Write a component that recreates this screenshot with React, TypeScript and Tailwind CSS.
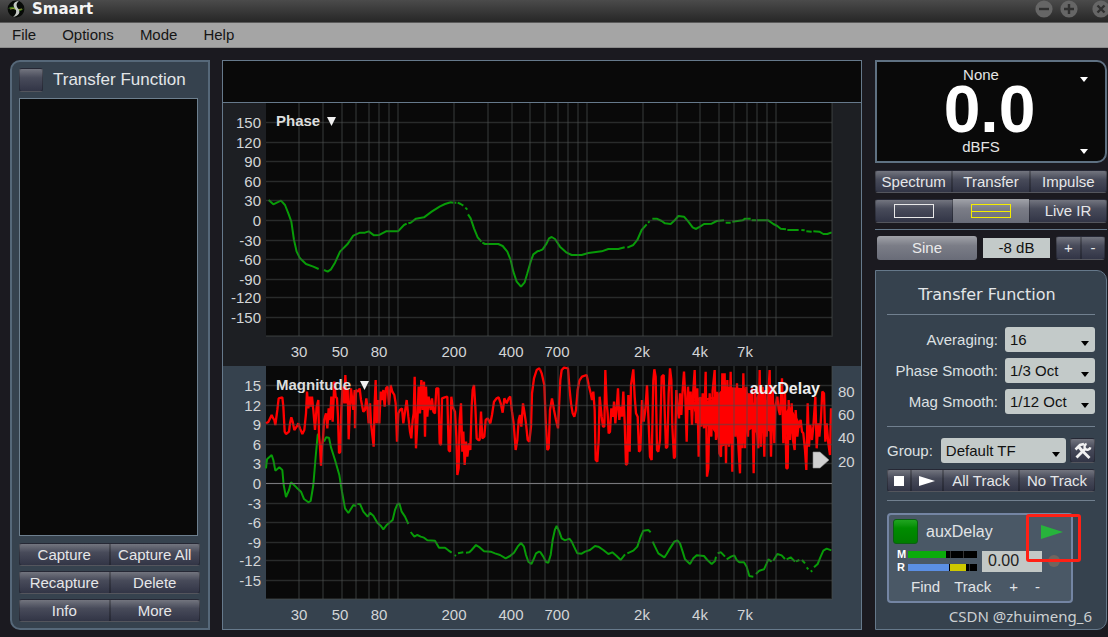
import clsx from 'clsx';
import type { ReactNode } from 'react';

const button =
  'flex items-center justify-center bg-linear-to-b from-[#73757f] via-[#484b5a] via-40% to-[#323546] text-[15px] leading-5 text-[#e6e7e9] border-black/25';

const GRID_X = [
  76, 100, 119, 133, 146, 156, 166, 175, 231, 265, 289, 307, 322, 335, 345, 355, 364, 420, 454, 477, 496, 511, 524,
  534, 544, 553,
];
const GRID_Y = [19, 39, 58, 78, 97, 117, 137, 156, 176, 194, 214];

const FREQS: [number, string][] = [
  [76, '30'],
  [117, '50'],
  [156, '80'],
  [231, '200'],
  [288, '400'],
  [334, '700'],
  [419, '2k'],
  [477, '4k'],
  [522, '7k'],
];

const PHASES = ['150', '120', '90', '60', '30', '0', '-30', '-60', '-90', '-120', '-150'];
const LEVELS = ['15', '12', '9', '6', '3', '0', '-3', '-6', '-9', '-12', '-15'];
const COHERENCE: [number, string][] = [
  [26, '80'],
  [49, '60'],
  [72, '40'],
  [96, '20'],
];

// Traces hold three units per chart unit, split in a low and a high half.
const PHASE_LOW =
  'M146,330 160,343 172,337 183,332 195,345 205,370 214,395 222,450 230,485 240,505 258,522 280,530 296,537 M312,540 323,545 333,538 345,518 360,485 382,463 400,437 420,428 435,428 446,424 462,436 478,435 498,424 534,424 552,405 560,401 M565,400 572,398 575,396 588,386 612,382 635,365 660,349 675,342 692,337 700,338 M704,338 709,338 M713,338 722,342 730,347 M736,353 742,359 M744,373 752,385 762,415 773,442 784,455 M787,458 795,462 835,462 848,468 862,485 872,510 880,545 890,575 903,590 914,577 922,550 932,515 940,493 952,484 960,482';
const PHASE_HIGH =
  'M0,482 8,478 20,460 27,445 35,441 45,447 60,470 80,488 95,495 125,495 145,489 185,484 205,477 235,477 254,472 M262,473 280,465 292,450 305,420 320,403 M324,398 329,394 M337,386 350,386 365,393 375,400 392,402 404,391 415,378 432,380 445,395 458,412 467,417 480,410 492,402 515,401 530,393 552,391 M557,398 572,398 M577,395 608,391 615,386 632,386 M635,391 648,391 M651,391 685,391 700,402 712,408 722,416 738,418 M742,420 776,420 M784,420 794,421 M799,424 815,425 M820,424 838,425 850,432 862,432 875,427';
const MAG_LOW =
  'M138,325 141,298 155,285 160,300 166,332 178,322 187,330 191,375 198,411 207,390 213,367 222,375 230,383 243,395 252,417 265,427 272,423 280,375 287,290 293,225 297,220 M312,245 318,232 327,233 333,262 345,300 358,345 366,395 375,445 385,459 400,435 408,438 M412,432 420,432 430,455 443,470 450,458 460,467 472,488 482,497 490,508 500,495 510,487 518,480 525,450 532,433 538,430 545,455 555,470 565,492 M572,516 583,530 592,525 602,530 612,533 622,541 645,542 657,563 675,563 685,571 695,578 M704,588 708,585 M714,580 730,577 M738,578 748,577 755,570 768,555 780,563 792,574 812,575 825,580 840,585 857,595 870,588 882,578 893,560 903,549 912,560 918,585 925,605 934,612 940,600 948,580 957,575 960,576';
const MAG_HIGH =
  'M0,575 10,590 18,606 25,608 32,585 38,540 45,508 50,498 58,515 65,535 75,541 88,536 95,545 102,560 112,580 125,581 135,575 150,570 165,558 175,560 190,570 205,582 217,577 230,588 242,600 255,583 M262,580 280,572 292,560 302,530 310,512 325,510 332,517 M338,545 345,560 355,580 373,592 380,582 390,565 403,545 412,541 420,550 428,575 435,598 450,612 460,595 470,586 492,588 502,600 515,612 525,603 528,590 M533,580 543,577 555,590 M560,598 573,590 583,586 590,600 598,607 612,607 620,620 628,648 640,650 M648,642 658,632 672,628 680,610 685,598 695,605 M700,602 712,582 725,586 735,597 M740,598 752,592 765,605 M768,604 778,600 M786,600 795,610 M800,622 805,628 M812,635 817,632 M822,622 833,612 842,590 850,572 860,566 874,571';
const COH_LOW =
  'M138,190 145,186 155,165 158,172 163,180 166,195 172,150 176,115 187,112 190,140 194,215 198,222 207,215 210,190 214,172 218,185 223,210 230,200 235,190 240,205 247,222 253,210 258,160 261,95 265,145 269,110 272,140 276,110 280,150 285,210 290,140 295,120 297,225 300,260 303,317 306,260 309,235 312,180 318,160 322,205 326,145 330,180 334,110 338,185 343,65 347,110 351,115 354,170 357,280 361,275 364,150 368,80 373,130 376,45 380,130 383,85 386,238 390,140 393,85 400,150 404,90 405,205 408,90 415,95 419,85 423,120 430,155 435,150 439,115 443,150 446,190 450,130 453,190 457,225 461,260 464,130 467,60 470,190 475,120 478,190 482,95 486,120 490,90 494,140 498,85 503,80 507,135 512,75 517,95 523,105 527,130 531,245 535,160 540,150 546,145 550,190 555,155 560,120 565,170 570,215 574,235 578,180 581,160 584,50 588,265 592,190 596,80 600,160 604,60 608,150 612,65 615,230 618,80 622,170 626,110 632,150 636,115 640,155 645,160 649,85 655,85 659,250 663,255 666,115 674,112 682,110 686,270 690,275 694,110 698,140 705,155 709,230 712,345 716,325 719,180 723,130 727,275 730,215 734,315 738,245 742,290 747,250 751,270 755,140 758,90 762,75 766,140 770,235 775,240 779,240 783,155 787,235 793,230 797,180 803,175 811,190 816,165 822,125 830,115 836,112 842,130 848,158 853,115 860,130 866,115 871,110 876,155 881,190 887,270 892,240 896,180 900,165 904,200 909,130 913,155 918,190 923,240 928,245 933,200 936,100 942,55 950,30 957,25 960,28';
const COH_HIGH =
  'M0,28 5,40 13,75 17,180 22,270 26,265 30,150 36,115 42,150 48,180 54,205 58,120 61,60 65,30 72,23 84,25 88,80 93,130 98,160 103,170 108,150 113,90 118,62 126,50 140,45 146,75 152,100 156,120 160,95 164,150 167,300 172,305 176,240 179,110 185,170 189,200 193,200 196,30 200,130 203,160 206,220 210,215 214,145 219,170 222,125 226,190 230,145 234,85 238,180 242,140 246,170 250,95 254,185 258,315 262,310 265,105 269,275 273,75 280,28 284,110 288,160 293,170 297,275 301,270 306,120 311,185 316,150 321,75 326,190 330,290 335,300 340,60 343,28 347,50 351,270 355,275 360,240 365,50 371,45 374,150 378,265 382,260 386,100 390,25 394,60 397,200 402,295 405,290 409,90 413,150 417,175 420,100 424,165 428,90 432,35 436,110 440,245 444,80 448,150 452,95 456,195 460,90 464,30 468,190 472,85 476,290 480,120 484,200 488,100 492,205 497,35 501,350 505,325 509,100 514,230 518,90 524,30 528,240 532,95 538,280 543,290 547,40 550,255 554,40 558,310 562,60 567,260 572,35 577,335 581,90 586,230 591,70 595,255 600,340 604,90 607,265 610,40 615,265 619,80 624,230 628,100 632,180 636,85 641,340 645,90 650,200 655,265 659,30 663,260 668,80 673,290 676,90 680,230 685,100 689,30 693,290 698,80 703,250 706,140 712,110 716,150 720,165 726,55 730,250 735,95 739,325 743,325 746,120 750,240 755,130 759,240 764,270 767,150 772,230 776,190 782,180 786,215 790,220 795,270 799,330 803,130 807,260 811,195 816,240 820,200 826,110 830,265 835,190 838,230 842,190 847,95 852,100 856,245 860,190 865,250 870,285 873,145';
const COH_DENSE =
  'M450,125 475,125 510,120 M450,125 545,105 612,105 M450,125 480,110 515,120 540,95 555,80 615,85 625,100 640,130 655,100 665,90 672,120 700,120 704,180 690,215 665,205 650,225 640,205 620,215 614,250 594,252 586,215 576,250 540,262 530,225 515,205 480,190Z M732,160 750,140 775,180 783,200 760,220 735,225Z';

function Trace({
  low,
  high,
  dy,
  color,
  width,
  dense,
}: {
  low: string;
  high: string;
  dy: number;
  color: string;
  width: number;
  dense?: string;
}) {
  return (
    <g fill="none" stroke={color} strokeWidth={width} strokeLinejoin="bevel">
      <path d={low} transform={`translate(-3 ${dy}) scale(0.33333)`} />
      <path d={high} transform={`translate(317 ${dy}) scale(0.33333)`} />
      {dense && <path d={dense} fill={color} stroke="none" transform={`translate(317 ${dy}) scale(0.33333)`} />}
    </g>
  );
}

function Chart({
  title,
  labels,
  zeroLine,
  className,
  children,
  overlay,
}: {
  title: string;
  labels: string[];
  zeroLine?: boolean;
  className: string;
  children: ReactNode;
  overlay?: ReactNode;
}) {
  return (
    <svg viewBox="0 0 638 263" role="img" aria-label={title} className={clsx('block w-full', className)}>
      <rect x="43" y="0" width="566" height="233" fill="#090909" />
      {children}
      <g stroke="#4a4d4e" strokeOpacity="0.5" strokeWidth="1.5">
        {GRID_X.map((x) => (
          <line key={x} x1={x} x2={x} y1="0" y2="233" />
        ))}
        {GRID_Y.map((y) => (
          <line key={y} x1="43" x2="609" y1={y + 0.5} y2={y + 0.5} />
        ))}
        <path d="M43,233H609V0" fill="none" />
      </g>
      {zeroLine && <line x1="43" x2="609" y1="117.5" y2="117.5" stroke="#77777b" />}
      <g fill="#d3d5d7" fontSize="15">
        {labels.map((label, i) => (
          <text key={label} x="38" y={GRID_Y[i] + 6} textAnchor="end">
            {label}
          </text>
        ))}
        {FREQS.map(([x, label]) => (
          <text key={label} x={x} y="254" textAnchor="middle">
            {label}
          </text>
        ))}
      </g>
      {overlay}
    </svg>
  );
}

function ChartTitle({ text, y, arrowX }: { text: string; y: number; arrowX: number }) {
  return (
    <g fill="#f0f0f0">
      <text x="53" y={y} fontSize="15" fontWeight="bold" fill="#dcdddd">
        {text}
      </text>
      <path d={`M${arrowX},${y - 9}h9l-4.5,9z`} />
    </g>
  );
}

function Arrow({ className }: { className?: string }) {
  return (
    <svg viewBox="0 0 8 5" className={clsx('pointer-events-none absolute h-[5px] w-2', className)} fill="currentColor">
      <path d="M0,0h8l-4,5z" />
    </svg>
  );
}

function Select({ id, value, className }: { id: string; value: string; className: string }) {
  return (
    <div className={clsx('relative h-[25px] text-black', className)}>
      <select
        id={id}
        defaultValue={value}
        className="h-full w-full appearance-none rounded-[3px] bg-[#c3cac9] pl-[5px] text-[15px] leading-5 text-[#111]"
      >
        <option>{value}</option>
      </select>
      <Arrow className="right-[6px] bottom-[6px]" />
    </div>
  );
}

function MeterSelect({ label, value }: { label: string; value: string }) {
  return (
    <div className="relative h-5 text-white">
      <select
        aria-label={label}
        defaultValue={value}
        className="h-5 w-full appearance-none bg-transparent pr-5 text-center text-[15px] leading-5 text-[#e4e4e4]"
      >
        <option className="bg-black">{value}</option>
      </select>
      <Arrow className="right-[17px] bottom-px" />
    </div>
  );
}

function WindowButton({ label, d }: { label: string; d: string }) {
  return (
    <button type="button" aria-label={label} className="size-[18px]">
      <svg viewBox="0 0 18 18">
        <circle cx="9" cy="9" r="8.6" fill="#666" />
        <path d={d} stroke="#303030" strokeWidth="2.4" fill="none" />
      </svg>
    </button>
  );
}

function Rule() {
  return <hr className="border-[#71808f]" />;
}

function TitleBar() {
  return (
    <header className="flex h-[23px] items-start overflow-hidden border-b border-[#5a5a5a] bg-linear-to-b from-[#4b4b4b] to-[#272727]">
      <svg viewBox="0 0 18 18" className="ml-[7px] size-[18px]">
        <circle cx="9" cy="9" r="8.4" fill="#070a07" />
        <path d="M1,9 Q4,5 9,8 T17,8 Q14,13 9,10 T1,9z" fill="#3f7a1a" />
        <path d="M3,9 Q6,8 9,9 T15,9" stroke="#9aa23a" strokeWidth="1" fill="none" />
        <path d="M12,1 C7,1 5,5 8,8.5 C10,11 9.5,14 6,17 C12,16 14,12 11,8.5 C9,6 9,3 12,1z" fill="#c4c9c4" />
      </svg>
      <h1 className="ml-[7px] text-[15px] leading-[18px] font-bold text-[#f4f4f4] font-['DejaVu_Sans',sans-serif]">Smaart</h1>
      <div className="-mr-[2px] ml-auto flex">
        <WindowButton label="Minimize" d="M4,9H14" />
        <div className="ml-[7px] mr-[14px] h-[18px]">
          <WindowButton label="Maximize" d="M4,9H14M9,4V14" />
        </div>
        <WindowButton label="Close" d="M5.5,5.5L12.5,12.5M12.5,5.5L5.5,12.5" />
      </div>
    </header>
  );
}

function CapturePanel() {
  const rows = [
    ['Capture', 'Capture All'],
    ['Recapture', 'Delete'],
    ['Info', 'More'],
  ];

  return (
    <aside className="flex w-[200px] shrink-0 flex-col rounded-l-[10px] border-2 border-[#566879] bg-[#36424e] pt-1 pr-2 pb-[6px] pl-[7px]">
      <div className="flex h-7 items-center">
        <button type="button" aria-label="Select session" className={clsx(button, 'size-6 rounded-[3px] border')} />
        <h2 className="ml-[10px] text-[17px] leading-6 text-[#e3e6e8]">Transfer Function</h2>
      </div>
      <div className="mt-1 mr-[2px] flex-1 border border-[#6d7f8e] bg-[#090909]" />
      <div className="mt-[7px] flex flex-col gap-[5px]">
        {rows.map((row) => (
          <div key={row[0]} className="flex">
            {row.map((name) => (
              <button
                key={name}
                type="button"
                className={clsx(button, 'h-[23px] flex-1 border whitespace-nowrap first:rounded-l-[3px] last:rounded-r-[3px]')}
              >
                {name}
              </button>
            ))}
          </div>
        ))}
      </div>
    </aside>
  );
}

function Plots() {
  return (
    <main className="min-w-0 flex-1 border border-[#66798b]">
      <div className="h-[42px] border-b border-[#66798b] bg-[#090909]" />
      <Chart title="Phase" labels={PHASES} className="bg-[#1d1f23]" overlay={<ChartTitle text="Phase" y={23} arrowX={104} />}>
        <Trace low={PHASE_LOW} high={PHASE_HIGH} dy={-13} color="#089b08" width={6} />
      </Chart>
      <Chart
        title="Magnitude"
        labels={LEVELS}
        zeroLine
        className="bg-[#36424e]"
        overlay={
          <>
            <ChartTitle text="Magnitude" y={24} arrowX={137} />
            <text x="597" y="28" textAnchor="end" fontSize="16" fontWeight="bold" fill="#eee">
              auxDelay
            </text>
            <g fill="#d3d5d7" fontSize="15">
              {COHERENCE.map(([y, label]) => (
                <text key={label} x="615" y={y + 5}>
                  {label}
                </text>
              ))}
            </g>
            <path d="M590,86h7l9,8l-9,8h-7z" fill="#d0d0d0" stroke="#8f8f8f" strokeWidth="0.6" />
          </>
        }
      >
        <Trace low={MAG_LOW} high={MAG_HIGH} dy={-6} color="#089b08" width={6} />
        <Trace low={COH_LOW} high={COH_HIGH} dy={-6} color="#ff0000" width={7} dense={COH_DENSE} />
      </Chart>
    </main>
  );
}

function Engine() {
  return (
    <section className="relative mt-3 flex w-[186px] flex-col rounded-[4px] border-2 border-[#7485a3] bg-[#4a5866] px-1 pt-1 pb-1">
      <div className="flex items-center">
        <button
          type="button"
          aria-label="Trace colour"
          className="size-[25px] rounded-[3px] border border-[#0b5f12] bg-linear-to-b from-[#1fa51f] via-[#008c00] via-35% to-[#007d00]"
        />
        <span className="ml-2 text-[16px] leading-5 text-[#e1e4e6]">auxDelay</span>
        <button type="button" aria-label="Run auxDelay" className="mr-1 ml-auto">
          <svg viewBox="0 0 22 16" className="h-4 w-[22px]">
            <path d="M0,1L22,8L0,15z" fill="#27b33c" />
          </svg>
        </button>
      </div>
      <div className="mt-1 flex items-center">
        <div className="ml-1 flex flex-col text-[11px] leading-[13px] font-bold text-white">
          <div className="flex items-center">
            <span className="w-[10px]">M</span>
            <span className="ml-px flex h-[7px] w-[69px] bg-black">
              <span className="w-[38px] bg-[#0bab0b]" />
              <span className="ml-1 w-px bg-[#333]" />
              <span className="ml-3 w-px bg-[#333]" />
            </span>
          </div>
          <div className="flex items-center">
            <span className="w-[10px]">R</span>
            <span className="ml-px flex h-[7px] w-[69px] bg-black">
              <span className="w-[41px] bg-[#5b8fe4]" />
              <span className="ml-px w-4 bg-[#cdc800]" />
              <span className="ml-[3px] w-px bg-[#333]" />
            </span>
          </div>
        </div>
        <input
          aria-label="Delay"
          defaultValue="0.00"
          className="ml-[5px] h-[21px] w-[60px] bg-[#c3c8c6] pl-[6px] text-[16px] leading-5 text-[#222]"
        />
        <span className="ml-[6px] size-3 rounded-full bg-[#70655f]" />
      </div>
      <div className="mt-[3px] flex pl-[18px] text-[15px] leading-5 text-[#e1e4e6]">
        <button type="button">Find</button>
        <button type="button" className="ml-[14px]">
          Track
        </button>
        <button type="button" className="ml-[18px]">
          +
        </button>
        <button type="button" className="ml-[17px]">
          -
        </button>
      </div>
      <div className="pointer-events-none absolute -top-px left-[137px] h-12 w-[55px] rounded-[3px] border-[3px] border-[#ff2015]" />
    </section>
  );
}

function ControlPanel() {
  const settings = [
    { id: 'averaging', label: 'Averaging:', value: '16' },
    { id: 'phase-smooth', label: 'Phase Smooth:', value: '1/3 Oct' },
    { id: 'mag-smooth', label: 'Mag Smooth:', value: '1/12 Oct' },
  ];

  return (
    <section className="mt-[10px] flex flex-1 flex-col rounded-r-[10px] border border-[#65788a] bg-[#36424e] px-[11px]">
      <h2 className="mt-3 mb-[7px] pr-2 text-center text-[16px] leading-6 text-[#e3e6e8] font-['DejaVu_Sans',sans-serif]">
        Transfer Function
      </h2>
      <Rule />
      <div className="my-3 flex flex-col gap-[6px]">
        {settings.map((s) => (
          <div key={s.id} className="flex items-center justify-end">
            <label htmlFor={s.id} className="mr-[7px] text-[15px] leading-5 text-[#dde0e2]">
              {s.label}
            </label>
            <Select id={s.id} value={s.value} className="w-[90px]" />
          </div>
        ))}
      </div>
      <Rule />
      <div className="mt-[11px] flex items-center">
        <label htmlFor="group" className="text-[15px] leading-5 text-[#dde0e2]">
          Group:
        </label>
        <Select id="group" value="Default TF" className="mr-1 ml-2 flex-1" />
        <button type="button" aria-label="Group settings" className={clsx(button, 'size-[25px] rounded-[3px] border')}>
          <svg viewBox="0 0 18 18" className="size-[18px]" stroke="#f2f2f2" fill="none">
            <path d="M2.5,15.5L11,7" strokeWidth="2.8" />
            <path d="M12.6,1.8A3,3 0 1 0 16.4,5.4" strokeWidth="2.4" />
            <path d="M7,7.5L15.5,16" strokeWidth="2.8" />
            <path d="M1.5,7.5L6,3L10,2" strokeWidth="2.6" />
            <path d="M4.5,4.5L7.5,8" strokeWidth="3" />
          </svg>
        </button>
      </div>
      <div className="mt-[6px] mb-2 flex h-[23px]">
        <button type="button" aria-label="Stop" className={clsx(button, 'w-6 rounded-l-[3px] border')}>
          <span className="size-[10px] bg-white" />
        </button>
        <button type="button" aria-label="Start" className={clsx(button, 'w-8 border')}>
          <svg viewBox="0 0 16 10" className="h-[10px] w-4" fill="white">
            <path d="M0,0L16,5L0,10z" />
          </svg>
        </button>
        <button type="button" className={clsx(button, 'flex-1 border whitespace-nowrap')}>
          All Track
        </button>
        <button type="button" className={clsx(button, 'flex-1 rounded-r-[3px] border whitespace-nowrap')}>
          No Track
        </button>
      </div>
      <Rule />
      <Engine />
      <p className="mt-[3px] mr-[3px] text-right text-[15px] leading-5 text-[#ccd0d2] font-['Noto_Sans',sans-serif]">
        CSDN @zhuimeng_6
      </p>
    </section>
  );
}

function SidePanel() {
  return (
    <aside className="ml-px flex w-[232px] shrink-0 flex-col">
      <section className="rounded-r-[10px] border-2 border-[#5f7182] bg-[#090909] pt-px pb-[6px]">
        <MeterSelect label="Meter input" value="None" />
        <p className="h-[52px] pr-[3px] text-center text-[66px] leading-[52px] font-bold text-white">0.0</p>
        <MeterSelect label="Meter scale" value="dBFS" />
      </section>
      <div className="mt-[7px] flex h-[23px]">
        <button type="button" className={clsx(button, 'flex-1 rounded-l-[3px] border')}>
          Spectrum
        </button>
        <button type="button" className={clsx(button, 'flex-1 border')}>
          Transfer
        </button>
        <button type="button" className={clsx(button, 'flex-1 rounded-r-[3px] border')}>
          Impulse
        </button>
      </div>
      <div className="mt-[6px] flex h-6">
        <button type="button" aria-label="Single plot" className={clsx(button, 'flex-1 rounded-l-[3px] border')}>
          <span className="h-[14px] w-10 border border-[#e8e8e8]" />
        </button>
        <button
          type="button"
          aria-label="Split plot"
          className="flex flex-1 items-center justify-center bg-linear-to-b from-[#a1a3a9] via-[#7b7d87] via-40% to-[#696c78]"
        >
          <span className="flex h-[14px] w-10 flex-col border border-[#f4ec00]">
            <span className="flex-1 border-b border-[#f4ec00]" />
            <span className="flex-1" />
          </span>
        </button>
        <button type="button" className={clsx(button, 'flex-1 rounded-r-[3px] border')}>
          Live IR
        </button>
      </div>
      <hr className="mt-[6px] border-[#65788a]" />
      <div className="mt-[6px] flex h-6 items-center pr-[2px] pl-[2px]">
        <button
          type="button"
          className="h-6 flex-1 rounded-[3px] bg-linear-to-b from-[#a1a3a9] via-[#7b7d87] via-40% to-[#696c78] text-[15px] leading-5 text-[#ebebec]"
        >
          Sine
        </button>
        <input
          aria-label="Generator level"
          defaultValue="-8 dB"
          className="mr-[6px] ml-[6px] h-5 w-[67px] bg-[#c3cac9] text-center text-[15px] leading-5 text-[#111]"
        />
        <button type="button" className={clsx(button, 'h-6 w-[25px] rounded-l-[3px] border')}>
          +
        </button>
        <button type="button" className={clsx(button, 'h-6 w-6 rounded-r-[3px] border')}>
          -
        </button>
      </div>
      <ControlPanel />
    </aside>
  );
}

export default function App() {
  return (
    <div className="min-h-screen bg-[#1b1a20] pb-[7px] font-['Liberation_Sans',Arial,sans-serif]">
      <TitleBar />
      <nav className="flex h-[25px] items-center gap-[26px] border-b border-[#8a8a8a] bg-[#a5a5a5] px-3 text-[15px] leading-5 text-[#151515]">
        <a href="#file">File</a>
        <a href="#options">Options</a>
        <a href="#mode">Mode</a>
        <a href="#help">Help</a>
      </nav>
      <div className="mt-3 flex gap-3 pr-px pl-[10px]">
        <CapturePanel />
        <Plots />
        <SidePanel />
      </div>
    </div>
  );
}
